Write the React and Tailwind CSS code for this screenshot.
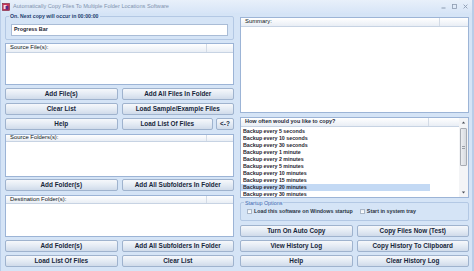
import React from "react";

const Btn = ({ children, className = "" }) => (
  <button
    className={`flex h-[12px] items-center justify-center rounded-[2px] border border-[#9fb3ce] bg-linear-to-b from-[#f6f8fb] via-[#e4ebf4] to-[#d0dbea] text-[6.4px] leading-none font-bold text-[#17263a] ${className}`}
  >
    {children}
  </button>
);

const ListBox = ({ title, className = "", divider = "right-[26px]", headerH = "h-[9px]" }) => (
  <div className={`flex flex-col border border-[#9cb4d6] bg-white ${className}`}>
    <div
      className={`relative flex ${headerH} shrink-0 items-center border-b border-[#c7d3e3] bg-linear-to-b from-[#ffffff] to-[#e9eef5] px-[4px] text-[5.9px] leading-none text-[#0d1520]`}
    >
      {title}
      <span className={`absolute top-0 bottom-0 w-px bg-[#d3dbe6] ${divider}`} />
    </div>
  </div>
);

const Row2 = ({ left, right }) => (
  <div className="grid grid-cols-2 gap-[4px]">
    <Btn>{left}</Btn>
    <Btn>{right}</Btn>
  </div>
);

const Check = ({ children, className = "" }) => (
  <label className={`flex items-center gap-[2px] ${className}`}>
    <span className="h-[5px] w-[5px] border border-[#aab7c8] bg-linear-to-b from-[#e9edf2] to-[#ffffff]" />
    <span className="text-[5.3px] leading-none font-bold text-[#2a3443]">{children}</span>
  </label>
);

const intervals = [
  "Backup every 5 seconds",
  "Backup every 10 seconds",
  "Backup every 30 seconds",
  "Backup every 1 minute",
  "Backup every 2 minutes",
  "Backup every 5 minutes",
  "Backup every 10 minutes",
  "Backup every 15 minutes",
  "Backup every 20 minutes",
  "Backup every 30 minutes",
];

export default function App() {
  return (
    <div className="flex h-[271px] w-[474px] flex-col overflow-hidden border-r-[2px] border-l border-[#b9cde8] bg-[#d5e4f6] font-['Liberation_Sans',Arial,sans-serif]">
      {/* title bar */}
      <div className="flex h-[13px] shrink-0 items-center bg-linear-to-b from-[#e8f0fa] to-[#d7e5f7] pl-[1px] pr-[4px]">
        <svg width="8" height="8" viewBox="0 0 8 8" className="mr-[3px]">
          <rect x="0.5" y="0.5" width="7" height="7" fill="#c8325a" stroke="#7a1e3a" strokeWidth="0.6" />
          <rect x="1.6" y="2" width="3" height="4" fill="#f4d7e2" />
          <rect x="3.6" y="3" width="2.8" height="3.6" fill="#5a2a86" />
        </svg>
        <span className="text-[5.6px] leading-none text-[#8193ae]">
          Automatically Copy Files To Multiple Folder Locations Software
        </span>
        <div className="ml-auto flex items-center gap-[6px] text-[#8c9bb0]">
          <svg width="5" height="5" viewBox="0 0 5 5">
            <rect x="0.5" y="3.5" width="4" height="1" fill="currentColor" />
          </svg>
          <svg width="5" height="5" viewBox="0 0 5 5">
            <rect x="0.5" y="0.5" width="4" height="4" fill="none" stroke="currentColor" strokeWidth="0.8" />
          </svg>
          <svg width="5" height="5" viewBox="0 0 5 5">
            <path d="M0.6 0.6 L4.4 4.4 M4.4 0.6 L0.6 4.4" stroke="currentColor" strokeWidth="0.9" />
          </svg>
        </div>
      </div>

      <div className="flex gap-[6px] pl-[4px]">
        {/* left column */}
        <div className="flex w-[229px] flex-col">
          <div className="relative mt-[3px] h-[24px] rounded-[2px] border border-[#b3c8e4] px-[5px] pt-[7px]">
            <span className="absolute -top-[3px] left-[3px] bg-[#d5e4f6] px-[1px] text-[5.2px] leading-none font-bold text-[#1d3c6e]">
              On. Next copy will occur in 00:00:00
            </span>
            <div className="flex h-[12px] items-center border border-[#a9bcd6] bg-white px-[2px] text-[5.4px] leading-none font-bold text-[#1b2433]">
              Progress Bar
            </div>
          </div>

          <ListBox title="Source File(s):" className="mt-[3px] h-[42px]" />

          <div className="mt-[3px] flex flex-col gap-[3px]">
            <Row2 left="Add File(s)" right="Add All Files In Folder" />
            <Row2 left="Clear List" right="Load Sample/Example Files" />
            <div className="grid grid-cols-2 gap-[4px]">
              <Btn>Help</Btn>
              <div className="flex gap-[3px]">
                <Btn className="flex-1">Load List Of Files</Btn>
                <Btn className="w-[18px]">&lt;-?</Btn>
              </div>
            </div>
          </div>

          <ListBox title="Source Folders(s):" className="mt-[4px] h-[43px]" headerH="h-[7px]" />
          <div className="mt-[2px]">
            <Row2 left="Add Folder(s)" right="Add All Subfolders In Folder" />
          </div>

          <ListBox title="Destination Folder(s):" className="mt-[4px] h-[42px]" headerH="h-[8px]" />
          <div className="mt-[3px] flex flex-col gap-[3px]">
            <Row2 left="Add Folder(s)" right="Add All Subfolders In Folder" />
            <Row2 left="Load List Of Files" right="Clear List" />
          </div>
        </div>

        {/* right column */}
        <div className="flex w-[229px] flex-col">
          <ListBox title="Summary:" className="mt-[4px] h-[96px]" divider="right-[28px]" />

          <div className="mt-[4px] flex h-[81px] border border-[#9cb4d6] bg-white">
            <div className="flex flex-1 flex-col">
              <div className="relative flex h-[9px] shrink-0 items-center border-b border-[#c7d3e3] bg-linear-to-b from-[#ffffff] to-[#e9eef5] px-[4px] text-[5.5px] leading-none font-bold text-[#1e2a3a]">
                How often would you like to copy?
                <span className="absolute top-0 bottom-0 right-[30px] w-px bg-[#d3dbe6]" />
              </div>
              <div className="flex flex-col pt-[1px]">
                {intervals.map((t) => (
                  <div
                    key={t}
                    className={`flex h-[7px] w-[189px] items-center pl-[2px] text-[5.3px] leading-none font-bold text-[#1f2530] ${
                      t === "Backup every 20 minutes" ? "bg-[#c3d9f4]" : ""
                    }`}
                  >
                    {t}
                  </div>
                ))}
              </div>
            </div>
            <div className="flex w-[9px] flex-col items-center bg-[#f3f4f6]">
              <svg width="5" height="5" viewBox="0 0 5 5" className="mt-[2px]">
                <path d="M0.8 3.5 L2.5 1.5 L4.2 3.5 Z" fill="#4a4f58" />
              </svg>
              <div className="mt-[3px] flex h-[38px] w-[7px] items-center justify-center rounded-[1px] border border-[#a8acb3] bg-linear-to-r from-[#eceef1] to-[#d8dbe0]">
                <span className="h-[3px] w-[3px] border-y border-[#9a9fa7]" />
              </div>
              <svg width="5" height="5" viewBox="0 0 5 5" className="mt-auto mb-[2px]">
                <path d="M0.8 1.5 L2.5 3.5 L4.2 1.5 Z" fill="#4a4f58" />
              </svg>
            </div>
          </div>

          <div className="relative mt-[4px] h-[19px] rounded-[2px] border border-[#b3c8e4] pt-[6px] pl-[6px]">
            <span className="absolute -top-[2px] left-[3px] bg-[#d5e4f6] px-[1px] text-[5.4px] leading-none text-[#3d69b0]">
              Startup Options
            </span>
            <div className="flex items-center">
              <Check>Load this software on Windows startup</Check>
              <Check className="ml-[7px]">Start in system tray</Check>
            </div>
          </div>

          <div className="mt-[4px] flex flex-col gap-[3px]">
            <Row2 left="Turn On Auto Copy" right="Copy Files Now (Test)" />
            <Row2 left="View History Log" right="Copy History To Clipboard" />
            <Row2 left="Help" right="Clear History Log" />
          </div>
        </div>
      </div>
    </div>
  );
}
